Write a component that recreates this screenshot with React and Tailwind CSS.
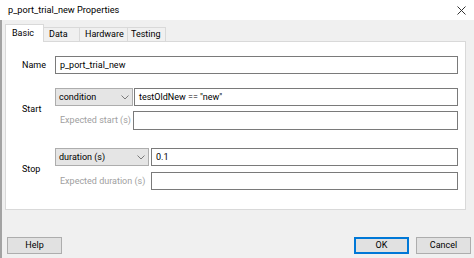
import React from 'react';

const Chevron = () => (
  <svg width="8" height="5" viewBox="0 0 8 5" className="shrink-0">
    <path d="M0.5 0.5 L4 4 L7.5 0.5" fill="none" stroke="#7a7a7a" strokeWidth="1" />
  </svg>
);

const Select = ({ value, width }) => (
  <div className={`${width} h-[18px] shrink-0 flex items-center justify-between bg-[#e5e5e5] border border-[#adadad] pl-[3px] pr-[3px] text-black`}>
    <span>{value}</span>
    <Chevron />
  </div>
);

const Field = ({ value, height = 'h-[18px]' }) => (
  <div className={`flex-1 ${height} flex items-center bg-white border border-[#7a7a7a] px-[4px] text-black whitespace-nowrap`}>
    {value}
  </div>
);

const Button = ({ children, primary }) => (
  <div
    className={`w-[55px] h-[17px] flex items-center justify-center bg-[#e1e1e1] border ${
      primary ? 'border-[#0078d7] shadow-[inset_0_0_0_1px_#0078d7]' : 'border-[#adadad]'
    }`}
  >
    {children}
  </div>
);

const tabs = [
  { label: 'Basic', w: 'w-[39px]', pl: 'pl-[6px]' },
  { label: 'Data', w: 'w-[36px]', pl: 'pl-[5px]' },
  { label: 'Hardware', w: 'w-[48px]', pl: 'pl-[5px]' },
  { label: 'Testing', w: 'w-[38px]', pl: 'pl-[3px]' },
];

export default function App() {
  return (
    <div className="w-[474px] h-[258px] bg-[#f0f0f0] flex flex-col overflow-hidden text-[9px] text-black font-['Roboto',sans-serif] leading-none whitespace-nowrap">
      {/* Title bar */}
      <div className="h-[20px] shrink-0 bg-white flex items-center justify-between pl-[8px] pr-[8px]">
        <span className="text-[9.2px]">p_port_trial_new Properties</span>
        <svg width="9" height="9" viewBox="0 0 9 9">
          <path d="M0.5 0.5 L8.5 8.5 M8.5 0.5 L0.5 8.5" stroke="#333" strokeWidth="1" />
        </svg>
      </div>

      {/* Body */}
      <div className="flex-1 flex flex-col border-l-2 border-[#a3a3a3] pl-[3px] pr-[8px]">
        {/* Tabs */}
        <div className="flex items-end h-[17px] mt-[4px] relative z-10">
          {tabs.map((t, i) =>
            i === 0 ? (
              <div
                key={t.label}
                className={`${t.w} h-[18px] bg-white border border-[#d9d9d9] border-b-0 flex items-start pt-[4px] ${t.pl} -mb-px`}
              >
                {t.label}
              </div>
            ) : (
              <div
                key={t.label}
                className={`${t.w} h-[14px] bg-[#f0f0f0] border border-[#d9d9d9] border-b-0 border-l-0 flex items-center ${t.pl}`}
              >
                {t.label}
              </div>
            )
          )}
        </div>

        {/* Panel */}
        <div className="h-[169px] bg-white border border-[#d9d9d9] pl-[16px] pr-[7px] pt-[14px] flex flex-col">
          <div className="flex items-center">
            <span className="w-[33px] shrink-0">Name</span>
            <Field value="p_port_trial_new" />
          </div>

          <div className="flex items-center mt-[14px]">
            <span className="w-[33px] shrink-0">Start</span>
            <div className="flex-1 flex flex-col gap-[5px]">
              <div className="flex gap-px">
                <Select value="condition" width="w-[78px]" />
                <Field value={'testOldNew == "new"'} />
              </div>
              <div className="flex items-center">
                <span className="w-[78px] shrink-0 pl-[5px] text-[#a0a0a0]">Expected start (s)</span>
                <Field height="h-[19px]" />
              </div>
            </div>
          </div>

          <div className="flex items-center mt-[18px]">
            <span className="w-[33px] shrink-0">Stop</span>
            <div className="flex-1 flex flex-col gap-[6px]">
              <div className="flex gap-[2px]">
                <Select value="duration (s)" width="w-[94px]" />
                <Field value="0.1" />
              </div>
              <div className="flex items-center">
                <span className="w-[96px] shrink-0 pl-[5px] text-[#a0a0a0]">Expected duration (s)</span>
                <Field />
              </div>
            </div>
          </div>
        </div>

        {/* Buttons */}
        <div className="flex items-center mt-[27px] pl-[2px]">
          <Button>Help</Button>
          <div className="flex-1" />
          <div className="flex gap-[7px] -mr-[5px]">
            <Button primary>OK</Button>
            <Button>Cancel</Button>
          </div>
        </div>
      </div>
    </div>
  );
}
